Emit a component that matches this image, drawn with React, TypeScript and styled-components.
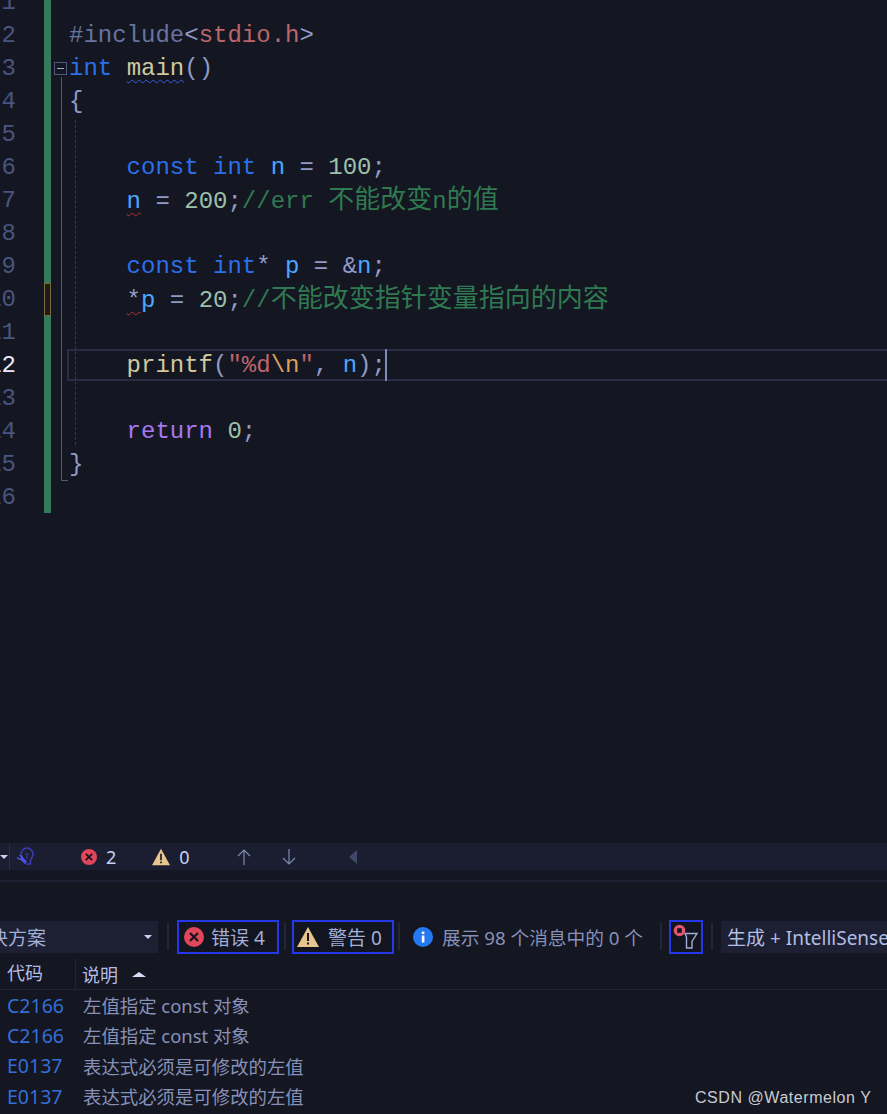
import React from "react";
import styled, { createGlobalStyle } from "styled-components";

const GlobalStyle = createGlobalStyle`
  html, body {
    margin: 0;
    padding: 0;
    background: #141622;
  }
`;

const UI_FONT = `"Noto Sans", "Noto Sans CJK SC", sans-serif`;
const CJK_FONT = `"Noto Sans CJK SC", sans-serif`;

const Page = styled.div`
  position: relative;
  width: 887px;
  height: 1114px;
  overflow: hidden;
  background: #141622;
  font-family: ${UI_FONT};
  color: #a3aed6;
`;

/* editor */
const Editor = styled.div`
  display: flex;
  height: 843px;
`;

const Gutter = styled.div`
  width: 16px;
  flex-shrink: 0;
  margin-top: -14px;
`;

const LineNo = styled.div<{ $active?: boolean }>`
  height: 33px;
  display: flex;
  justify-content: flex-end;
  align-items: center;
  font-family: "Liberation Mono", monospace;
  font-size: 24px;
  white-space: nowrap;
  color: ${(p) => (p.$active ? "#e6e9fb" : "#47557f")};
`;

const ChangeBar = styled.div`
  position: relative;
  width: 7px;
  height: 513px;
  margin-left: 28px;
  background: #37795a;
  flex-shrink: 0;
`;

const WarnMark = styled.div`
  position: absolute;
  left: 0;
  top: 283px;
  width: 7px;
  height: 33px;
  box-sizing: border-box;
  background: #1b1a1c;
  border: 1px solid #7d6a35;
`;

const Code = styled.div`
  position: relative;
  flex: 1;
  margin-top: -14px;
  padding-left: 18px;
  font-family: "Liberation Mono", monospace;
  font-size: 24px;
  color: #909bc6;
`;

const Row = styled.div`
  height: 33px;
  line-height: 33px;
  white-space: pre;
`;

const FoldBox = styled.div`
  position: absolute;
  left: 3px;
  top: 76px;
  width: 13px;
  height: 13px;
  box-sizing: border-box;
  border: 1px solid #4d577f;
  &::after {
    content: "";
    position: absolute;
    left: 2px;
    right: 2px;
    top: 5px;
    height: 1px;
    background: #a3aed6;
  }
`;

const FoldLine = styled.div`
  position: absolute;
  left: 10px;
  top: 91px;
  width: 6px;
  height: 403px;
  border-left: 1px solid #4d577f;
  border-bottom: 1px solid #4d577f;
`;

const IndentGuide = styled.div`
  position: absolute;
  left: 24px;
  top: 134px;
  height: 325px;
  border-left: 1px dashed #333a55;
`;

const CurrentLine = styled.div`
  position: absolute;
  left: 16px;
  right: 0;
  top: 363px;
  height: 32px;
  box-sizing: border-box;
  border: 2px solid #2a2b44;
  border-right: 0;
`;

const Caret = styled.div`
  position: absolute;
  left: 334px;
  top: 363px;
  width: 2px;
  height: 32px;
  background: #7f8abc;
`;

const Kw = styled.span`
  color: #2b70ea;
`;
const Var = styled.span`
  color: #4aa6ff;
`;
const Fn = styled.span`
  color: #cfc99f;
`;
const Num = styled.span`
  color: #9cc0aa;
`;
const Str = styled.span`
  color: #bc666b;
`;
const Esc = styled.span`
  color: #dd9f5a;
`;
const Ctl = styled.span`
  color: #a678f0;
`;
const Pre = styled.span`
  color: #67739f;
`;
const Comment = styled.span`
  color: #2f7a50;
`;
const Cjk = styled.span`
  font-family: ${CJK_FONT};
  font-size: 26px;
  line-height: 1;
`;
const Squiggle = styled.span<{ $color: string }>`
  text-decoration: underline wavy ${(p) => p.$color} 1px;
  text-underline-offset: 4px;
`;

/* status strip under the editor */
const StatusStrip = styled.div`
  display: flex;
  align-items: center;
  height: 27px;
  background: #1b1e30;
  font-size: 18px;
  color: #c8d2f5;
`;

const StripCombo = styled.div`
  width: 10px;
  height: 100%;
  display: flex;
  align-items: center;
  box-sizing: border-box;
  border-right: 1px solid #2a2d45;
`;

const SmallCaret = styled.div`
  width: 0;
  height: 0;
  border-left: 4px solid transparent;
  border-right: 4px solid transparent;
  border-top: 4px solid #c8d2f5;
`;

const StripItem = styled.div<{ $left: number }>`
  display: flex;
  align-items: center;
  gap: 9px;
  margin-left: ${(p) => p.$left}px;
`;

const ScrollArrow = styled.div`
  width: 0;
  height: 0;
  margin-left: 53px;
  border-top: 7px solid transparent;
  border-bottom: 7px solid transparent;
  border-right: 8px solid #3f4868;
`;

const Divider = styled.div`
  height: 2px;
  margin-top: 10px;
  background: #1f2233;
`;

/* error list toolbar */
const Toolbar = styled.div`
  display: flex;
  align-items: center;
  height: 33px;
  margin-top: 38px;
  font-size: 19px;
`;

const Combo = styled.div`
  display: flex;
  align-items: center;
  justify-content: space-between;
  width: 158px;
  height: 32px;
  box-sizing: border-box;
  padding-right: 6px;
  background: #1d2033;
  white-space: nowrap;
`;

const ClippedText = styled.span`
  margin-left: -30px;
`;

const Sep = styled.div<{ $left: number; $right: number }>`
  width: 2px;
  height: 27px;
  margin: 0 ${(p) => p.$right}px 0 ${(p) => p.$left}px;
  background: #232639;
  flex-shrink: 0;
`;

const ToggleButton = styled.div<{ $width: number; $pad: number; $gap?: number }>`
  display: flex;
  align-items: center;
  gap: ${(p) => p.$gap ?? 9}px;
  width: ${(p) => p.$width}px;
  height: 34px;
  box-sizing: border-box;
  padding-left: ${(p) => p.$pad}px;
  border: 2px solid #2438e8;
  background: #12141f;
  flex-shrink: 0;
  white-space: nowrap;
`;

const MessageNote = styled.div`
  display: flex;
  align-items: center;
  gap: 9px;
  width: 250px;
  font-size: 18.7px;
  white-space: nowrap;
  color: #8791b8;
`;

const BuildCombo = styled.div`
  display: flex;
  align-items: center;
  height: 32px;
  padding-left: 6px;
  flex: 1;
  background: #1d2033;
  white-space: nowrap;
  overflow: hidden;
  color: #b3bde2;
`;

/* error table */
const TableHead = styled.div`
  display: flex;
  align-items: center;
  height: 30px;
  margin-top: 6px;
  border-bottom: 1px solid #20233a;
  font-size: 18px;
  color: #b3bde2;
`;

const CodeHeadCell = styled.div`
  width: 76px;
  box-sizing: border-box;
  padding-left: 7px;
  height: 100%;
  line-height: 29px;
  border-right: 1px solid #20233a;
`;

const DescHeadCell = styled.div`
  display: flex;
  align-items: center;
  gap: 14px;
  padding-left: 6px;
`;

const SortCaret = styled.div`
  width: 0;
  height: 0;
  border-left: 7px solid transparent;
  border-right: 7px solid transparent;
  border-bottom: 5px solid #d7dcf5;
`;

const ErrRow = styled.div`
  display: flex;
  align-items: center;
  height: 30.3px;
  font-size: 18.4px;
  white-space: nowrap;
`;

const ErrCode = styled.div`
  width: 83px;
  padding-left: 7px;
  box-sizing: border-box;
  font-size: 19.5px;
  color: #336fd6;
`;

const ErrText = styled.div`
  color: #8791b8;
`;

const Watermark = styled.div`
  position: absolute;
  left: 695px;
  top: 1089px;
  font-family: "Liberation Sans", sans-serif;
  font-size: 16px;
  letter-spacing: 0.55px;
  color: #c9cbd0;
`;

const ErrorIcon = ({ size }: { size: number }) => (
  <svg width={size} height={size} viewBox="0 0 20 20">
    <circle cx="10" cy="10" r="10" fill="#e0465c" />
    <path d="M6 6l8 8M14 6l-8 8" stroke="#16141c" strokeWidth="2.2" />
  </svg>
);

const WarnIcon = ({ size }: { size: number }) => (
  <svg width={size} height={size} viewBox="0 0 22 20">
    <path d="M11 0L22 20H0z" fill="#e8c48e" />
    <path d="M11 6v8M11 15.5v2" stroke="#16141c" strokeWidth="2" />
  </svg>
);

const InfoIcon = () => (
  <svg width="20" height="20" viewBox="0 0 20 20">
    <circle cx="10" cy="10" r="10" fill="#2478f0" />
    <rect x="8.8" y="8.5" width="2.6" height="7" fill="#fff" />
    <rect x="8.8" y="4.6" width="2.6" height="2.4" fill="#fff" />
  </svg>
);

const FilterIcon = () => (
  <svg width="30" height="30" viewBox="0 0 30 30">
    <path
      d="M14 11.5H26L21 19.5V26H15.5V15z"
      fill="none"
      stroke="#a3aed6"
      strokeWidth="1.4"
    />
    <circle cx="8.5" cy="8.5" r="5.8" fill="#e0566c" />
    <rect x="6.2" y="6.2" width="4.6" height="4.6" fill="#12141f" />
  </svg>
);

const FixIcon = () => (
  <svg width="18" height="20" viewBox="0 0 18 20">
    <path
      d="M5 7.5C5 3.5 8 1 11 1s6 2.5 6 6.5c0 2.5-2 4-2.6 6V17H10"
      fill="none"
      stroke="#3a3cb8"
      strokeWidth="1.5"
    />
    <path d="M9 6.5c.8 1 3.2 1 4 0M11 8v4" fill="none" stroke="#3a3cb8" />
    <path
      d="M1 9.500l2.600 2.200L5 10.400 3.100 8c2-.6 3.900.6 3.900 2.500l4 4-2.200 2.500-4-4C2.500 13.200.5 11.700 1 9.500z"
      fill="#4f53e4"
    />
  </svg>
);

const ThinArrow = ({ up }: { up?: boolean }) => (
  <svg width="14" height="16" viewBox="0 0 14 16">
    <path
      d={up ? "M7 16V1M1 7l6-6 6 6" : "M7 0v15M1 9l6 6 6-6"}
      fill="none"
      stroke="#7d89b0"
      strokeWidth="1.2"
    />
  </svg>
);

const lineNumbers = Array.from({ length: 16 }, (_, i) => i + 1);

const errors = [
  { code: "C2166", text: "左值指定 const 对象" },
  { code: "C2166", text: "左值指定 const 对象" },
  { code: "E0137", text: "表达式必须是可修改的左值" },
  { code: "E0137", text: "表达式必须是可修改的左值" },
];

export default function App() {
  return (
    <Page>
      <GlobalStyle />
      <Editor>
        <Gutter>
          {lineNumbers.map((n) => (
            <LineNo key={n} $active={n === 12}>
              {n}
            </LineNo>
          ))}
        </Gutter>
        <ChangeBar>
          <WarnMark />
        </ChangeBar>
        <Code>
          <FoldBox />
          <FoldLine />
          <IndentGuide />
          <CurrentLine />
          <Caret />
          <Row> </Row>
          <Row>
            <Pre>#include</Pre>
            {"<"}
            <Str>stdio.h</Str>
            {">"}
          </Row>
          <Row>
            <Kw>int</Kw> <Squiggle $color="#2f62d8"><Fn>main</Fn></Squiggle>()
          </Row>
          <Row>{"{"}</Row>
          <Row> </Row>
          <Row>
            {"    "}
            <Kw>const int</Kw> <Var>n</Var> = <Num>100</Num>;
          </Row>
          <Row>
            {"    "}
            <Squiggle $color="#b03038"><Var>n</Var></Squiggle> = <Num>200</Num>;
            <Comment>
              //err <Cjk>不能改变</Cjk>n<Cjk>的值</Cjk>
            </Comment>
          </Row>
          <Row> </Row>
          <Row>
            {"    "}
            <Kw>const int</Kw>* <Var>p</Var> = &amp;<Var>n</Var>;
          </Row>
          <Row>
            {"    "}
            <Squiggle $color="#b03038">*</Squiggle>
            <Var>p</Var> = <Num>20</Num>;
            <Comment>
              //<Cjk>不能改变指针变量指向的内容</Cjk>
            </Comment>
          </Row>
          <Row> </Row>
          <Row>
            {"    "}
            <Fn>printf</Fn>(<Str>"%d</Str>
            <Esc>\n</Esc>
            <Str>"</Str>, <Var>n</Var>);
          </Row>
          <Row> </Row>
          <Row>
            {"    "}
            <Ctl>return</Ctl> <Num>0</Num>;
          </Row>
          <Row>{"}"}</Row>
        </Code>
      </Editor>

      <StatusStrip>
        <StripCombo>
          <SmallCaret />
        </StripCombo>
        <StripItem $left={6}>
          <FixIcon />
        </StripItem>
        <StripItem $left={47}>
          <ErrorIcon size={16} />2
        </StripItem>
        <StripItem $left={36}>
          <WarnIcon size={18} />0
        </StripItem>
        <StripItem $left={47}>
          <ThinArrow up />
        </StripItem>
        <StripItem $left={31}>
          <ThinArrow />
        </StripItem>
        <ScrollArrow />
      </StatusStrip>
      <Divider />

      <Toolbar>
        <Combo>
          <ClippedText>解决方案</ClippedText>
          <SmallCaret />
        </Combo>
        <Sep $left={9} $right={8} />
        <ToggleButton $width={102} $pad={5} $gap={7}>
          <ErrorIcon size={20} />
          错误 4
        </ToggleButton>
        <Sep $left={5} $right={6} />
        <ToggleButton $width={102} $pad={3}>
          <WarnIcon size={22} />
          警告 0
        </ToggleButton>
        <Sep $left={4} $right={13} />
        <MessageNote>
          <InfoIcon />
          展示 98 个消息中的 0 个
        </MessageNote>
        <Sep $left={-3} $right={7} />
        <ToggleButton $width={34} $pad={0}>
          <FilterIcon />
        </ToggleButton>
        <Sep $left={8} $right={8} />
        <BuildCombo>生成 + IntelliSense</BuildCombo>
      </Toolbar>

      <TableHead>
        <CodeHeadCell>代码</CodeHeadCell>
        <DescHeadCell>
          说明
          <SortCaret />
        </DescHeadCell>
      </TableHead>
      {errors.map((e, i) => (
        <ErrRow key={i}>
          <ErrCode>{e.code}</ErrCode>
          <ErrText>{e.text}</ErrText>
        </ErrRow>
      ))}
      <Watermark>CSDN @Watermelon Y</Watermark>
    </Page>
  );
}
